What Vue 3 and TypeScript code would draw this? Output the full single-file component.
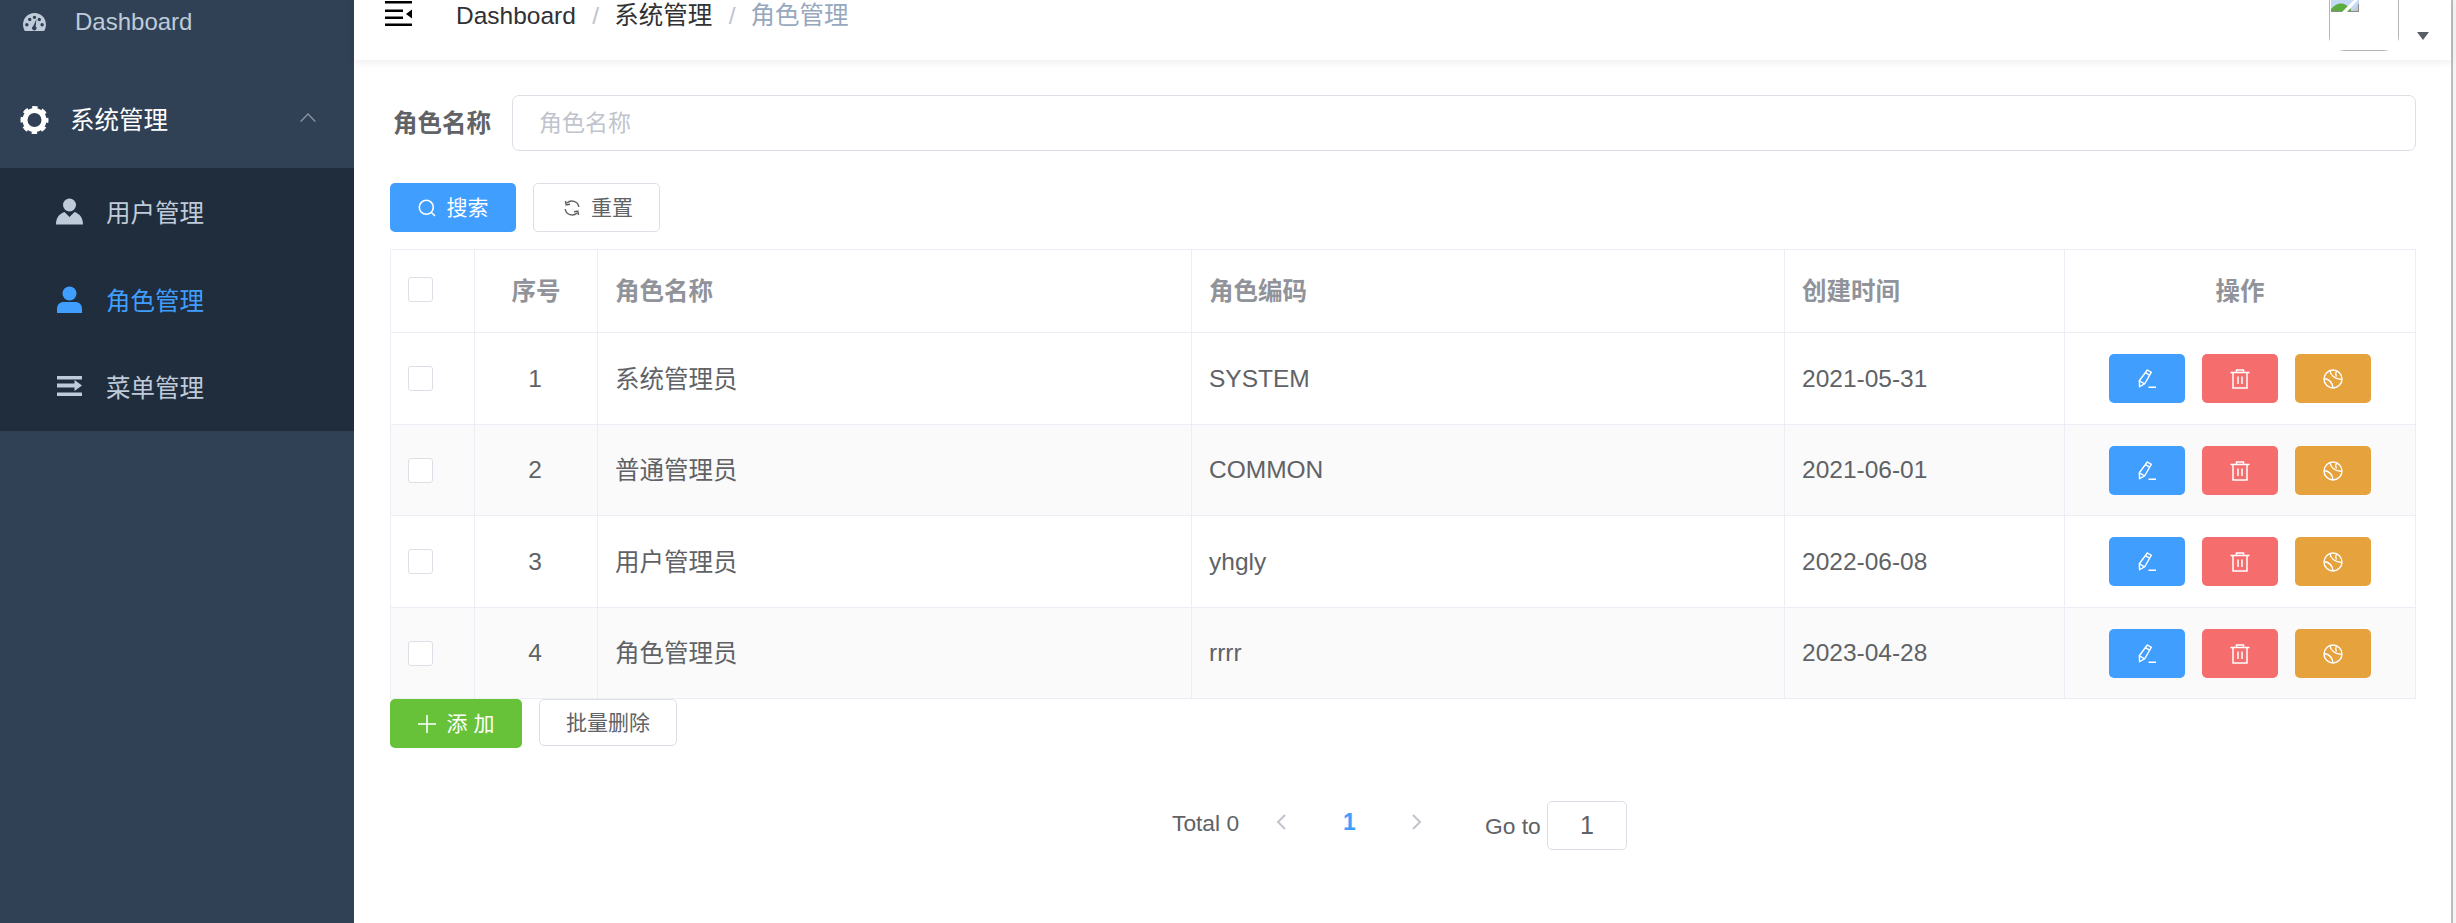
<script setup lang="ts">
interface Role { id: number; name: string; code: string; date: string }
const roles: Role[] = [
  { id: 1, name: '系统管理员', code: 'SYSTEM', date: '2021-05-31' },
  { id: 2, name: '普通管理员', code: 'COMMON', date: '2021-06-01' },
  { id: 3, name: '用户管理员', code: 'yhgly', date: '2022-06-08' },
  { id: 4, name: '角色管理员', code: 'rrrr', date: '2023-04-28' },
]
</script>

<template>
  <div class="app">
    <aside class="sidebar">
      <div class="dash">
        <svg class="ic-dash" viewBox="0 0 26 22"><path fill="#bfcbd9" fill-rule="evenodd" d="M13 1C6 1 1 6.500 1 13c0 2.600.8 5 2 7h20c1.200-2 2-4.400 2-7 0-6.500-5-12-12-12zM5 11.500a1.800 1.800 0 1 1 0 3.600 1.800 1.800 0 0 1 0-3.600zm3-5.500a1.800 1.800 0 1 1 0 3.600A1.800 1.800 0 0 1 8 6zm5-2.200a1.800 1.800 0 1 1 0 3.600 1.800 1.800 0 0 1 0-3.600zm5 2.200a1.800 1.800 0 1 1 0 3.600A1.800 1.800 0 0 1 18 6zm3 5.500a1.800 1.800 0 1 1 0 3.600 1.800 1.800 0 0 1 0-3.600zM15 7.500l-.8 7.700a2.300 2.300 0 1 1-2.600-.2z"/></svg>
        <span>Dashboard</span>
      </div>
      <div class="group">
        <svg class="ic-gear" viewBox="0 0 28 28">
          <circle cx="14" cy="14" r="9.500" fill="none" stroke="#fff" stroke-width="5"/>
          <circle cx="14" cy="14" r="12.500" fill="none" stroke="#fff" stroke-width="3" stroke-dasharray="5.400 4.420" stroke-dashoffset="2.700"/>
        </svg>
        <span class="group-title">系统管理</span>
        <svg class="ic-up" viewBox="0 0 16 9"><path d="M.7 8.500 8 1l7.300 7.500" fill="none" stroke="#8a94a0" stroke-width="1.300"/></svg>
      </div>
      <div class="submenu">
        <div class="sub">
          <svg class="ic-sub" viewBox="0 0 27 26"><circle cx="13.500" cy="6.500" r="6.500" fill="#bfcbd9"/><path fill="#bfcbd9" d="M0 26c0-6.500 3-10.500 8.500-12.500l5 5 5-5C24 15.500 27 19.500 27 26z"/></svg>
          <span>用户管理</span>
        </div>
        <div class="sub active">
          <svg class="ic-sub" viewBox="0 0 27 27"><circle cx="13.500" cy="7.500" r="7" fill="#409eff"/><path fill="#409eff" d="M1 27v-4c0-4.500 3-7 7-7h11c4 0 7 2.500 7 7v4z"/></svg>
          <span>角色管理</span>
        </div>
        <div class="sub">
          <svg class="ic-sub" viewBox="0 0 27 27"><path fill="#bfcbd9" d="M1 3h25v3.500H1zM1 10.500h17.500V7l7.500 5.500-7.500 5.500v-3.500H1zM1 19.500h25V23H1z"/></svg>
          <span>菜单管理</span>
        </div>
      </div>
    </aside>

    <div class="main">
      <header class="navbar">
        <svg class="ic-ham" viewBox="0 0 27 25"><path d="M0 0h27v2.500H0zM0 8.500h18V11H0zM0 15.500h18V18H0zM0 22.500h27V25H0zM27 8.500v9l-6-4.500z" fill="#000"/></svg>
        <nav class="crumbs">
          <span class="c-link">Dashboard</span><span class="c-sep">/</span>
          <span class="c-link">系统管理</span><span class="c-sep">/</span>
          <span class="c-last">角色管理</span>
        </nav>
        <div class="avatar-wrap">
          <div class="avatar">
            <div class="avatar-img">
              <svg class="broken" viewBox="0 0 28 12"><path d="M0 0h28v12H0z" fill="#c3d9f5"/><path d="M0 12V9c4-5 10-7 15-4l5 4v3z" fill="#5aad3e"/><path d="M27 0 16 12H11L23 0z" fill="#fff"/><path d="M21 12 28 4v8z" fill="#c9c9c9"/><path d="M0 11h11v1H0zM17 11h11v1H17zM27 4h1v8h-1z" fill="#8b8b8b"/></svg>
            </div>
          </div>
          <span class="caret"></span>
        </div>
      </header>

      <section class="content">
        <div class="form-row">
          <label class="f-label">角色名称</label>
          <input class="f-input" placeholder="角色名称" />
        </div>
        <div class="search-row">
          <button class="btn btn-blue">
            <svg class="ic-search" viewBox="0 0 18 18"><circle cx="8.300" cy="8.300" r="7" fill="none" stroke="#fff" stroke-width="1.600"/><path d="m13.200 13.200 3.800 3.800" stroke="#fff" stroke-width="1.600"/></svg>
            <span>搜索</span>
          </button>
          <button class="btn btn-plain btn-reset">
            <svg class="ic-refresh" viewBox="0 0 16 16"><path d="M14.800 7A7 7 0 0 0 3 3M1.200 9A7 7 0 0 0 13 13" fill="none" stroke="#606266" stroke-width="1.500"/><path d="M1.500 1 2.200 4.800l3.800-.6M14.500 15l-.7-3.800-3.800.6" fill="none" stroke="#606266" stroke-width="1.500"/></svg>
            <span>重置</span>
          </button>
        </div>

        <table class="grid">
          <colgroup>
            <col class="c1" /><col class="c2" /><col class="c3" /><col class="c4" /><col class="c5" /><col />
          </colgroup>
          <thead>
            <tr>
              <th><span class="check"></span></th>
              <th class="center">序号</th>
              <th>角色名称</th>
              <th>角色编码</th>
              <th>创建时间</th>
              <th class="center">操作</th>
            </tr>
          </thead>
          <tbody>
            <tr v-for="r in roles" :key="r.id">
              <td><span class="check"></span></td>
              <td class="center num">{{ r.id }}</td>
              <td class="cjk">{{ r.name }}</td>
              <td>{{ r.code }}</td>
              <td>{{ r.date }}</td>
              <td class="ops">
                <div class="op-row">
                  <button class="op op-blue">
                    <svg viewBox="0 0 20 20"><path d="M10.300 1 14.300 3.300 7.700 14.800 2.600 17.600l-.3-5.800zM8.700 3.800l4 2.300M2.300 11.800l5.400 3M11.500 18.200h7.500" fill="none" stroke="#fff" stroke-width="1.400"/></svg>
                  </button>
                  <button class="op op-red">
                    <svg viewBox="0 0 20 20"><path d="M.5 3.500h19M6.500 3.500V1h7v2.500M3 3.500V19h14V3.500M8 7.500v7.500M12 7.500v7.500" fill="none" stroke="#fff" stroke-width="1.500"/></svg>
                  </button>
                  <button class="op op-orange">
                    <svg viewBox="0 0 20 20"><circle cx="10" cy="10" r="9" fill="none" stroke="#fff" stroke-width="1.400"/><path d="M7 1.500C7.500 6 11.500 10 18.500 10.500M1.200 9.500c4 .5 8 3.500 8.800 9.500M13.500 1.800c-1 2-1 4 0 5.700" fill="none" stroke="#fff" stroke-width="1.400"/></svg>
                  </button>
                </div>
              </td>
            </tr>
          </tbody>
        </table>

        <div class="bulk-row">
          <button class="btn btn-green">
            <svg class="ic-plus" viewBox="0 0 18 18"><path d="M9 0v18M0 9h18" stroke="#fff" stroke-width="1.600"/></svg>
            <span>添 加</span>
          </button>
          <button class="btn btn-plain btn-bulk">批量删除</button>
        </div>

        <div class="pager">
          <span class="total">Total 0</span>
          <svg class="chev chev-l" viewBox="0 0 10 16"><path d="M9 1 2 8l7 7" fill="none" stroke="#c0c4cc" stroke-width="2"/></svg>
          <span class="page-num">1</span>
          <svg class="chev chev-r" viewBox="0 0 10 16"><path d="m1 1 7 7-7 7" fill="none" stroke="#c0c4cc" stroke-width="2"/></svg>
          <span class="goto">Go to</span>
          <span class="jump">1</span>
        </div>
      </section>
    </div>
    <div class="scrollbar"></div>
  </div>
</template>

<style>
html, body { margin: 0; background: #fff; overflow: hidden; }
</style>

<style scoped>
.app {
  display: flex;
  height: 923px;
  overflow: hidden;
  font-family: "Liberation Sans", "Noto Sans CJK SC", sans-serif;
  font-size: 24.500px;
  color: #606266;
}
.sidebar { width: 354px; flex: none; background: #304156; color: #bfcbd9; }
.dash { display: flex; align-items: center; height: 44px; margin-bottom: 32px; padding-left: 22px; font-size: 24px; }
.ic-dash { width: 25px; height: 21px; margin-right: 28px; }
.group { display: flex; align-items: center; height: 92px; padding: 0 38px 7px 20px; box-sizing: border-box; color: #fff; }
.ic-gear { width: 29px; height: 28px; margin: 2px 21px 0 0; }
.group-title { flex: 1; }
.ic-up { width: 16px; height: 9px; margin-bottom: 3px; }
.submenu { background: #1f2d3d; }
.sub { display: flex; align-items: center; height: 87.500px; padding-left: 56px; }
.sub span { margin-left: 23px; }
.sub.active { color: #409eff; }
.ic-sub { width: 27px; height: 27px; }

.main { flex: 1; min-width: 0; }
.scrollbar { width: 3px; flex: none; background: #f4f4f4; border-left: 2px solid #bdbdbd; }
.navbar {
  display: flex;
  align-items: flex-start;
  height: 60px;
  padding-left: 31px;
  box-shadow: 0 2px 8px rgba(0, 21, 41, .08);
  position: relative;
}
.ic-ham { width: 27px; height: 25px; margin-top: 1px; flex: none; }
.crumbs { display: flex; margin: 2px 0 0 44px; line-height: 28px; color: #303133; }
.c-sep { margin: 0 15px 0 16.500px; color: #c0c4cc; }
.c-last { color: #97a8be; }
.avatar-wrap { margin-left: auto; display: flex; align-items: flex-start; padding-right: 22px; }
.avatar { width: 70px; height: 51px; border-radius: 0 0 15px 15px; overflow: hidden; }
.avatar-img { height: 100%; box-sizing: border-box; border: 1px solid #b4b4b4; border-top: 0; }
.broken { display: block; width: 28px; height: 12px; margin-left: 1px; }
.caret {
  width: 0;
  height: 0;
  margin: 32px 0 0 18px;
  border-left: 6px solid transparent;
  border-right: 6px solid transparent;
  border-top: 8px solid #5a5e66;
}

.content { padding: 35px 35px 0 36px; }
.form-row { display: flex; align-items: center; height: 56px; }
.f-label { width: 122px; flex: none; padding: 0 0 3px 3px; box-sizing: border-box; font-weight: 700; }
.f-input {
  flex: 1;
  min-width: 0;
  height: 56px;
  box-sizing: border-box;
  border: 1.500px solid #dcdfe6;
  border-radius: 7px;
  padding: 0 26px;
  font: inherit;
  font-size: 23px;
  color: #606266;
  outline: none;
}
.f-input::placeholder { color: #c0c4cc; }
.search-row { display: flex; gap: 17px; margin-top: 32px; }
.btn {
  display: inline-flex;
  align-items: center;
  justify-content: center;
  height: 49px;
  box-sizing: border-box;
  border-radius: 5px;
  border: 0;
  padding: 0 0 4px;
  font-family: inherit;
  font-size: 21px;
}
.btn svg { margin-top: 4px; }
.btn-blue { width: 126px; background: #409eff; color: #fff; gap: 11px; }
.btn-plain { width: 127px; background: #fff; color: #606266; border: 1.500px solid #dcdfe6; gap: 11px; }
.btn-reset { padding-left: 4px; }
.ic-search { width: 18px; height: 18px; }
.ic-refresh { width: 16px; height: 16px; }

.grid {
  width: 100%;
  margin-top: 17px;
  table-layout: fixed;
  border-collapse: collapse;
  border: 1.500px solid #ebeef5;
}
.c1 { width: 84px; }
.c2 { width: 123px; }
.c3 { width: 594px; }
.c4 { width: 593px; }
.c5 { width: 280px; }
.grid th, .grid td {
  border: 1px solid #ebeef5;
  padding: 0 17px;
  text-align: left;
  font-weight: 400;
  box-sizing: border-box;
}
.grid th { height: 83px; padding-bottom: 3px; font-weight: 700; color: #909399; }
.grid tbody tr:nth-child(odd) td { height: 92px; }
.grid tbody tr:nth-child(even) td { height: 91px; background: #fafafa; }
.grid td.cjk { padding-bottom: 3px; }
.grid td.num { padding-right: 19px; }
.grid .center { text-align: center; }
.check {
  display: block;
  width: 25px;
  height: 25px;
  box-sizing: border-box;
  background: #fff;
  border: 1.500px solid #dcdfe6;
  border-radius: 3px;
}
.op-row { display: flex; justify-content: center; gap: 17px; }
.op {
  display: flex;
  align-items: center;
  justify-content: center;
  width: 76px;
  height: 49px;
  border: 0;
  border-radius: 5px;
  padding: 1px 0 0;
}
.op svg { width: 20px; height: 20px; }
.op-blue { background: #409eff; }
.op-red { background: #f66d6e; }
.op-orange { background: #e6a23c; }
.bulk-row { display: flex; align-items: flex-start; gap: 17px; }
.btn-green { width: 132px; background: #67c23a; color: #fff; gap: 11px; }
.ic-plus { width: 18px; height: 18px; }
.btn-bulk { width: 138px; height: 47px; padding-bottom: 3px; }

.pager { display: flex; align-items: center; height: 49px; margin-top: 53px; padding-left: 782px; font-size: 22.750px; }
.total { width: 104px; margin-top: -5px; }
.chev { width: 10px; height: 16px; }
.chev-l { margin-top: -8px; }
.page-num { width: 8px; margin: -6px 0 0 57px; color: #409eff; font-weight: 700; font-size: 23px; }
.chev-r { margin: -8px 0 0 61px; }
.goto { width: 62px; margin: 2px 0 0 63px; }
.jump {
  display: flex;
  align-items: center;
  justify-content: center;
  width: 80px;
  height: 49px;
  box-sizing: border-box;
  border: 1.500px solid #dcdfe6;
  border-radius: 5px;
  font-size: 25px;
}
</style>
